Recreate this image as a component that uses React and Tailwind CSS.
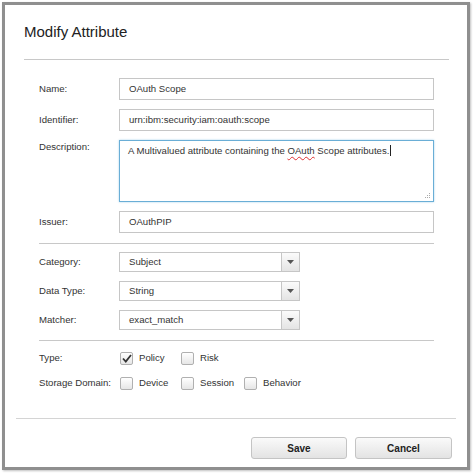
import React from "react";

function Label({ children, top }) {
  return (
    <div className={`w-[80px] shrink-0 ${top ? "self-start leading-[12px] pt-[1px]" : ""}`}>{children}</div>
  );
}

function TextInput({ value }) {
  return (
    <div className="flex-1 h-[22px] border border-[#c6c6c6] bg-white flex items-center pl-[9px] text-[#333]">
      {value}
    </div>
  );
}

function Select({ value }) {
  return (
    <div className="w-[181px] h-[20px] border border-[#c6c6c6] bg-white flex items-stretch">
      <div className="flex-1 flex items-center pl-[9px] text-[#333]">{value}</div>
      <div className="w-[18px] border-l border-[#c6c6c6] bg-gradient-to-b from-[#fbfbfb] to-[#e4e4e4] flex items-center justify-center">
        <svg width="7" height="4" viewBox="0 0 7 4">
          <path d="M0 0 L7 0 L3.5 4 Z" fill="#555" />
        </svg>
      </div>
    </div>
  );
}

function Checkbox({ checked, label, w }) {
  return (
    <div className={`flex items-center ${w}`}>
      <div className="w-[13px] h-[13px] rounded-[2px] border border-[#b0b0b0] bg-gradient-to-b from-white to-[#e6e6e6] flex items-center justify-center shrink-0">
        {checked && (
          <svg width="10" height="9" viewBox="0 0 10 9">
            <path d="M1 4.5 L3.8 7.5 L9 1" fill="none" stroke="#333" strokeWidth="1.8" />
          </svg>
        )}
      </div>
      <span className="ml-[6px]">{label}</span>
    </div>
  );
}

function Button({ children, w }) {
  return (
    <div className={`${w} h-[22px] rounded-[3px] border border-[#c4c4c4] bg-gradient-to-b from-[#fafafa] to-[#e3e3e3] flex items-center justify-center font-bold text-[#222] text-[10px]`}>
      {children}
    </div>
  );
}

export default function App() {
  return (
    <div
      className="w-[474px] h-[474px] bg-white pt-[2px] pl-[2px] text-[9.6px] text-[#333]"
      style={{ fontFamily: '"Liberation Sans", Arial, sans-serif' }}
    >
      <div className="w-[468px] h-[468px] border-[3px] border-[#8f8f8f] bg-white flex flex-col shadow-[1px_1px_2px_rgba(0,0,0,0.25)]">
        <div className="mt-[18px] ml-[19px] text-[15px] leading-[18px] text-[#222]">Modify Attribute</div>
        <div className="mt-[18px] ml-[19px] mr-[18px] h-px bg-[#c8c8c8]" />

        <div className="ml-[34px] mr-[33px] flex flex-col">
          <div className="mt-[18px] flex items-center">
            <Label>Name:</Label>
            <TextInput value="OAuth Scope" />
          </div>
          <div className="mt-[9px] flex items-center">
            <Label>Identifier:</Label>
            <TextInput value="urn:ibm:security:iam:oauth:scope" />
          </div>
          <div className="mt-[9px] flex">
            <Label top>Description:</Label>
            <div className="relative flex-1 h-[62px] border border-[#6aaed6] shadow-[0_0_2px_#a8d4ec] bg-white pl-[8px] pt-[3px] text-[#333] leading-[14px]">
              A Multivalued attribute containing the{" "}
              <span className="underline decoration-wavy decoration-[#e03030] decoration-1 underline-offset-2">OAuth</span>{" "}
              Scope attributes.
              <span className="inline-block w-px h-[11px] bg-[#222] align-[-2px] ml-[1px]" />
              <svg className="absolute right-[2px] bottom-[2px]" width="6" height="6" viewBox="0 0 6 6">
                <rect x="4" y="0" width="1" height="1" fill="#aaa" />
                <rect x="2" y="2" width="1" height="1" fill="#aaa" />
                <rect x="4" y="2" width="1" height="1" fill="#aaa" />
                <rect x="0" y="4" width="1" height="1" fill="#aaa" />
                <rect x="2" y="4" width="1" height="1" fill="#aaa" />
                <rect x="4" y="4" width="1" height="1" fill="#aaa" />
              </svg>
            </div>
          </div>
          <div className="mt-[9px] flex items-center">
            <Label>Issuer:</Label>
            <TextInput value="OAuthPIP" />
          </div>

          <div className="mt-[10px] h-px bg-[#c8c8c8]" />

          <div className="mt-[8px] flex items-center">
            <Label>Category:</Label>
            <Select value="Subject" />
          </div>
          <div className="mt-[9px] flex items-center">
            <Label>Data Type:</Label>
            <Select value="String" />
          </div>
          <div className="mt-[9px] flex items-center">
            <Label>Matcher:</Label>
            <Select value="exact_match" />
          </div>

          <div className="mt-[10px] h-px bg-[#c8c8c8]" />

          <div className="mt-[11px] flex items-center h-[13px]">
            <Label>Type:</Label>
            <div className="flex items-center ml-[1px]">
              <Checkbox checked label="Policy" w="w-[61px]" />
              <Checkbox label="Risk" w="w-[63px]" />
            </div>
          </div>
          <div className="mt-[12px] flex items-center h-[13px]">
            <Label>Storage Domain:</Label>
            <div className="flex items-center ml-[1px]">
              <Checkbox label="Device" w="w-[61px]" />
              <Checkbox label="Session" w="w-[63px]" />
              <Checkbox label="Behavior" w="w-[70px]" />
            </div>
          </div>
        </div>

        <div className="mt-[28px] ml-[11px] mr-[11px] h-px bg-[#d4d4d4]" />

        <div className="mt-[18px] mr-[15px] flex justify-end gap-[8px]">
          <Button w="w-[96px]">Save</Button>
          <Button w="w-[97px]">Cancel</Button>
        </div>
      </div>
    </div>
  );
}
